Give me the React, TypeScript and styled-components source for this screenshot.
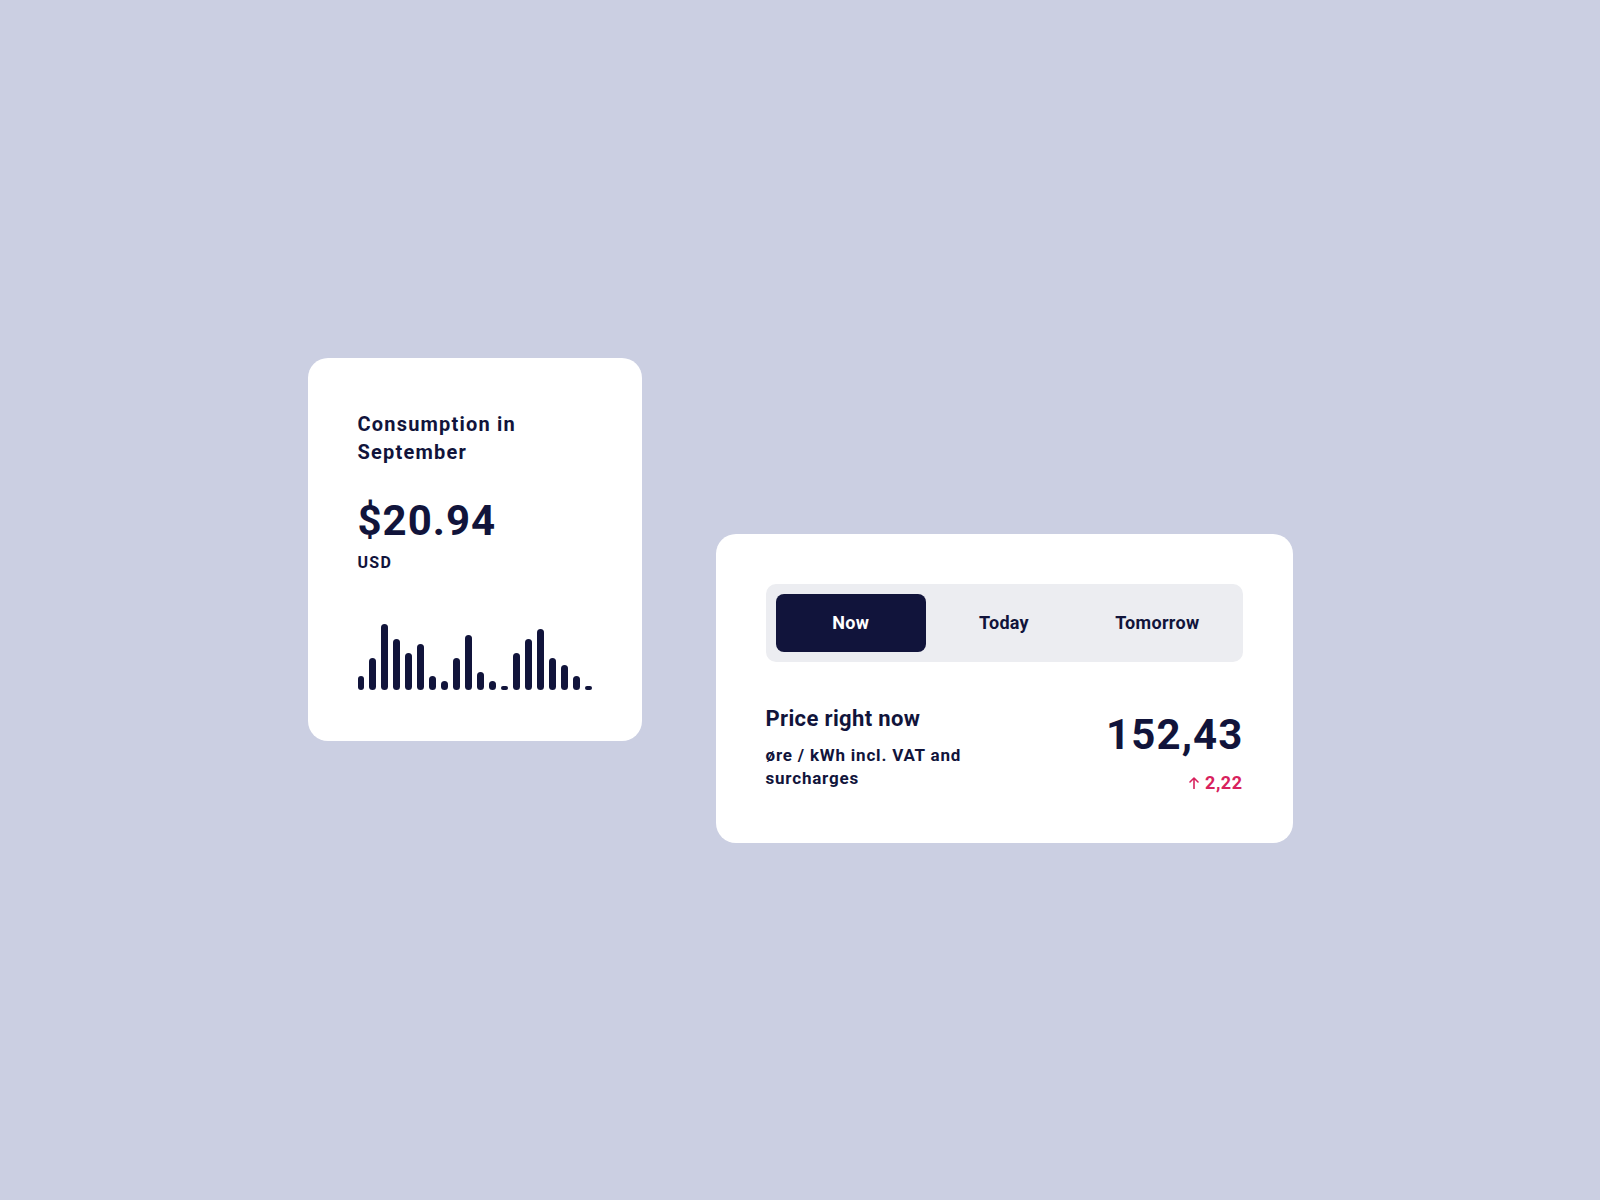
import React, { useState } from "react";
import styled, { createGlobalStyle } from "styled-components";

const navy = "#11143b";

const bars = [14, 32, 66, 51, 37, 46, 14, 9, 32, 55, 18, 9, 4, 37, 51, 61, 32, 25, 14, 4];
const tabs = ["Now", "Today", "Tomorrow"];

const GlobalStyle = createGlobalStyle`
  * {
    box-sizing: border-box;
  }
  body {
    margin: 0;
    background-color: #cbcfe2;
    font-family: Roboto, "Liberation Sans", sans-serif;
    color: ${navy};
  }
`;

const App = () => {
  const [active, setActive] = useState("Now");

  return (
    <>
      <GlobalStyle />
      <Page>
        <Row>
          <ConsumptionCard>
            <Title>Consumption in September</Title>
            <Amount>$20.94</Amount>
            <Currency>USD</Currency>
            <Chart>
              {bars.map((h, i) => (
                <Bar key={i} $height={h} />
              ))}
            </Chart>
          </ConsumptionCard>

          <PriceCard>
            <Tabs>
              {tabs.map((t) => (
                <Tab key={t} $active={active === t} onClick={() => setActive(t)}>
                  {t}
                </Tab>
              ))}
            </Tabs>
            <PriceRow>
              <PriceInfo>
                <PriceTitle>Price right now</PriceTitle>
                <PriceUnit>øre / kWh incl. VAT and surcharges</PriceUnit>
              </PriceInfo>
              <PriceValues>
                <PriceValue>152,43</PriceValue>
                <Change>
                  <svg width="10" height="12" viewBox="0 0 10 12" fill="none">
                    <path
                      d="M5 11.5V1.2M1 5l4-4 4 4"
                      stroke="currentColor"
                      strokeWidth="1.6"
                      strokeLinecap="round"
                      strokeLinejoin="round"
                    />
                  </svg>
                  2,22
                </Change>
              </PriceValues>
            </PriceRow>
          </PriceCard>
        </Row>
      </Page>
    </>
  );
};

const Page = styled.div`
  min-height: 100vh;
  display: flex;
  align-items: center;
  justify-content: center;
`;

const Row = styled.div`
  display: flex;
  align-items: flex-start;
  gap: 74px;
`;

const Card = styled.div`
  background-color: #ffffff;
  border-radius: 20px;
`;

const ConsumptionCard = styled(Card)`
  width: 334px;
  padding: 52px 50px 51px;
`;

const Title = styled.h2`
  margin: 0;
  font-size: 20px;
  line-height: 28px;
  font-weight: 700;
  letter-spacing: 1.2px;
`;

const Amount = styled.div`
  margin-top: 30px;
  font-size: 42px;
  line-height: 50px;
  font-weight: 700;
  letter-spacing: 1px;
`;

const Currency = styled.div`
  margin-top: 7px;
  font-size: 16px;
  line-height: 20px;
  font-weight: 700;
  letter-spacing: 1.3px;
`;

const Chart = styled.div`
  margin-top: 51px;
  height: 66px;
  display: flex;
  align-items: flex-end;
  gap: 5px;
`;

const Bar = styled.div<{ $height: number }>`
  width: 7px;
  height: ${(p) => p.$height}px;
  border-radius: 3.5px;
  background-color: ${navy};
`;

const PriceCard = styled(Card)`
  width: 577px;
  margin-top: 176px;
  padding: 50px 50px 49px;
`;

const Tabs = styled.div`
  display: grid;
  grid-template-columns: repeat(3, 1fr);
  gap: 3px;
  padding: 10px;
  border-radius: 10px;
  background-color: #ecedf1;
`;

const Tab = styled.button<{ $active: boolean }>`
  height: 58px;
  border: none;
  border-radius: 8px;
  cursor: pointer;
  font-family: inherit;
  font-size: 18px;
  font-weight: 700;
  letter-spacing: 0.3px;
  color: ${(p) => (p.$active ? "#ffffff" : navy)};
  background-color: ${(p) => (p.$active ? navy : "transparent")};
`;

const PriceRow = styled.div`
  margin-top: 43px;
  display: flex;
  justify-content: space-between;
  align-items: flex-start;
`;

const PriceInfo = styled.div`
  max-width: 230px;
`;

const PriceTitle = styled.div`
  font-size: 22px;
  line-height: 28px;
  font-weight: 700;
  letter-spacing: 0.35px;
`;

const PriceUnit = styled.div`
  margin-top: 11px;
  font-size: 17px;
  line-height: 23px;
  font-weight: 700;
  letter-spacing: 0.8px;
`;

const PriceValues = styled.div`
  padding-top: 5px;
  display: flex;
  flex-direction: column;
  align-items: flex-end;
`;

const PriceValue = styled.div`
  margin-right: -1px;
  font-size: 42px;
  line-height: 50px;
  font-weight: 700;
  letter-spacing: 1.1px;
`;

const Change = styled.div`
  margin-top: 12px;
  display: flex;
  align-items: center;
  gap: 6px;
  font-size: 18px;
  line-height: 22px;
  font-weight: 700;
  letter-spacing: 0.5px;
  color: #d8215d;
`;

export default App;
